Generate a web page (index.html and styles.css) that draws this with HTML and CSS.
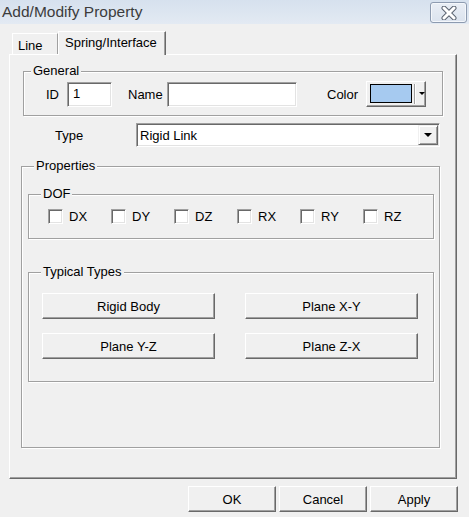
FILE: index.html
```html
<!DOCTYPE html>
<html>
<head>
<meta charset="utf-8">
<link rel="stylesheet" href="styles.css">
</head>
<body>
<div class="window">
  <div class="titlebar">
    <span class="title">Add/Modify Property</span>
    <div class="close">
      <svg width="18" height="14" viewBox="0 0 18 14">
        <path d="M4 2 L14 12 M14 2 L4 12" stroke="#5a6370" stroke-width="5" stroke-linecap="round"/>
        <path d="M4 2 L14 12 M14 2 L4 12" stroke="#ffffff" stroke-width="3" stroke-linecap="round"/>
      </svg>
    </div>
  </div>

  <div class="tabs">
    <div class="tab">Line</div>
    <div class="tab selected">Spring/Interface</div>
  </div>

  <div class="panel">
    <div class="group general">
      <span class="legend legend-general">General</span>
      <div class="general-row">
        <span class="lbl lbl-id">ID</span>
        <div class="edit edit-id">1</div>
        <span class="lbl lbl-name">Name</span>
        <div class="edit edit-name"></div>
        <span class="lbl lbl-color">Color</span>
        <div class="colorbtn">
          <div class="swatch"></div>
          <div class="sep"></div>
          <div class="mini-arrow"></div>
        </div>
      </div>
    </div>

    <div class="type-row">
      <span class="lbl lbl-type">Type</span>
      <div class="combo">
        <span class="combo-text">Rigid Link</span>
        <div class="combo-btn"><div class="tri"></div></div>
      </div>
    </div>

    <div class="group properties">
      <span class="legend">Properties</span>

      <div class="group dof">
        <span class="legend">DOF</span>
        <div class="checks">
          <label class="check"><span class="box"></span>DX</label>
          <label class="check"><span class="box"></span>DY</label>
          <label class="check"><span class="box"></span>DZ</label>
          <label class="check"><span class="box"></span>RX</label>
          <label class="check"><span class="box"></span>RY</label>
          <label class="check"><span class="box"></span>RZ</label>
        </div>
      </div>

      <div class="group typical">
        <span class="legend">Typical Types</span>
        <div class="type-buttons">
          <div class="btn">Rigid Body</div>
          <div class="btn">Plane X-Y</div>
          <div class="btn">Plane Y-Z</div>
          <div class="btn">Plane Z-X</div>
        </div>
      </div>
    </div>
  </div>

  <div class="footer">
    <div class="btn fbtn">OK</div>
    <div class="btn fbtn">Cancel</div>
    <div class="btn fbtn">Apply</div>
  </div>
</div>
</body>
</html>
```

FILE: styles.css
```css
* { box-sizing: border-box; }

html, body {
  margin: 0;
  padding: 0;
  background: #f0f0f0;
}

body {
  width: 469px;
  height: 517px;
  overflow: hidden;
  font-family: "Liberation Sans", Arial, sans-serif;
  font-size: 13px;
  color: #000;
}

.window {
  width: 469px;
  height: 517px;
}

.titlebar {
  height: 24px;
  background: linear-gradient(#d6e1ee, #e3eaf3);
  display: flex;
  align-items: center;
  justify-content: space-between;
  padding-left: 2px;
  padding-right: 2px;
}

.title {
  font-size: 15.5px;
  color: #3c3c3c;
  margin-top: -1px;
}

.close {
  width: 37px;
  height: 21px;
  margin-top: 1px;
  border: 1px solid #8d9bb0;
  border-radius: 3px;
  background: linear-gradient(#e9eef5, #dbe3ee);
  box-shadow: inset 0 0 0 1px #f4f7fb;
  display: flex;
  align-items: center;
  justify-content: center;
}

.tabs {
  display: flex;
  align-items: flex-end;
  height: 23px;
  margin-top: 7px;
  padding-left: 12px;
}

.tab {
  height: 21px;
  width: 46px;
  border-top: 1px solid #fff;
  border-left: 1px solid #fff;
  border-right: 1px solid #a0a0a0;
  padding-left: 5px;
  padding-top: 4px;
  line-height: 15px;
}

.tab.selected {
  height: 24px;
  width: 108px;
  margin-bottom: -1px;
  position: relative;
  z-index: 1;
  background: #f0f0f0;
  border-right: 1px solid #696969;
  box-shadow: inset -1px 0 0 #a0a0a0;
  padding-left: 6px;
  padding-top: 3px;
}

.panel {
  margin-left: 9px;
  width: 448px;
  height: 425px;
  border-top: 1px solid #fff;
  border-left: 1px solid #fff;
  border-right: 1px solid #696969;
  border-bottom: 1px solid #696969;
  box-shadow: inset -1px -1px 0 #a0a0a0;
  padding-top: 16px;
}

.group {
  position: relative;
  border: 1px solid #a0a0a0;
  box-shadow: inset 1px 1px 0 #fff, 1px 1px 0 #fff;
}

.legend {
  position: absolute;
  top: -9px;
  left: 12px;
  padding: 0 2px;
  background: #f0f0f0;
  line-height: 15px;
}

.legend-general {
  left: 7px;
}

.general {
  margin-left: 13px;
  width: 420px;
  height: 45px;
  padding-top: 9px;
  padding-left: 22px;
}

.general-row {
  display: flex;
  align-items: center;
  height: 26px;
}

.lbl {
  display: block;
  line-height: 15px;
}

.lbl-id { width: 21px; }
.lbl-name { width: 39px; margin-left: 16px; }
.lbl-color { width: 39px; margin-left: 30px; }
.lbl-type { width: 81px; }

.edit {
  height: 25px;
  background: #fff;
  border-top: 1px solid #a0a0a0;
  border-left: 1px solid #a0a0a0;
  border-right: 1px solid #fff;
  border-bottom: 1px solid #fff;
  box-shadow: inset 1px 1px 0 #696969, inset -1px -1px 0 #e3e3e3;
  padding: 3px 5px;
  line-height: 15px;
}

.edit-id { width: 45px; }
.edit-name { width: 130px; }

.colorbtn {
  position: relative;
  width: 60px;
  height: 26px;
  background: #f0f0f0;
  border-top: 1px solid #fff;
  border-left: 1px solid #fff;
  border-right: 1px solid #696969;
  border-bottom: 1px solid #696969;
  box-shadow: inset -1px -1px 0 #a0a0a0;
  display: flex;
  align-items: flex-start;
  padding: 2px 0 0 3px;
}

.swatch {
  width: 42px;
  height: 19px;
  background: #a6caf0;
  border: 1px solid #000;
}

.sep {
  width: 2px;
  height: 20px;
  margin-left: 2px;
  border-left: 1px solid #a0a0a0;
  border-right: 1px solid #fff;
}

.mini-arrow {
  margin-left: 3px;
  margin-top: 8px;
  width: 0;
  height: 0;
  border-left: 3px solid transparent;
  border-right: 3px solid transparent;
  border-top: 3px solid #000;
}

.type-row {
  display: flex;
  align-items: center;
  margin-top: 7px;
  padding-left: 45px;
  height: 24px;
}

.combo {
  width: 304px;
  height: 24px;
  background: #fff;
  border-top: 1px solid #a0a0a0;
  border-left: 1px solid #a0a0a0;
  border-right: 1px solid #fff;
  border-bottom: 1px solid #fff;
  box-shadow: inset 1px 1px 0 #696969, inset -1px -1px 0 #e3e3e3;
  display: flex;
  align-items: center;
  justify-content: space-between;
  padding: 1px 1px 1px 2px;
}

.combo-text {
  line-height: 15px;
  padding-left: 1px;
}

.combo-btn {
  width: 20px;
  height: 20px;
  background: #f0f0f0;
  border-top: 1px solid #f0f0f0;
  border-left: 1px solid #f0f0f0;
  border-right: 1px solid #696969;
  border-bottom: 1px solid #696969;
  box-shadow: inset 1px 1px 0 #fff, inset -1px -1px 0 #a0a0a0;
  display: flex;
  align-items: center;
  justify-content: center;
}

.tri {
  width: 0;
  height: 0;
  border-left: 4px solid transparent;
  border-right: 4px solid transparent;
  border-top: 4px solid #000;
}

.properties {
  margin-top: 19px;
  margin-left: 11px;
  width: 419px;
  height: 282px;
  padding-top: 27px;
  padding-left: 6px;
}

.dof {
  width: 406px;
  height: 45px;
  padding-top: 14px;
  padding-left: 19px;
}

.checks {
  display: flex;
}

.check {
  width: 63px;
  display: flex;
  align-items: center;
  line-height: 15px;
}

.box {
  width: 15px;
  height: 15px;
  margin-right: 6px;
  background: #fff;
  border-top: 1px solid #a0a0a0;
  border-left: 1px solid #a0a0a0;
  border-right: 1px solid #fff;
  border-bottom: 1px solid #fff;
  box-shadow: inset 1px 1px 0 #696969, inset -1px -1px 0 #e3e3e3;
}

.typical {
  margin-top: 33px;
  width: 406px;
  height: 110px;
  padding-top: 20px;
  padding-left: 13px;
}

.type-buttons {
  display: grid;
  grid-template-columns: 173px 173px;
  column-gap: 30px;
  row-gap: 14px;
}

.btn {
  height: 26px;
  background: #f0f0f0;
  border-top: 1px solid #fff;
  border-left: 1px solid #fff;
  border-right: 1px solid #696969;
  border-bottom: 1px solid #696969;
  box-shadow: inset -1px -1px 0 #a0a0a0;
  display: flex;
  align-items: center;
  justify-content: center;
  line-height: 15px;
}

.footer {
  display: flex;
  gap: 3px;
  margin-top: 7px;
  padding-left: 188px;
}

.fbtn {
  width: 88px;
}
```
